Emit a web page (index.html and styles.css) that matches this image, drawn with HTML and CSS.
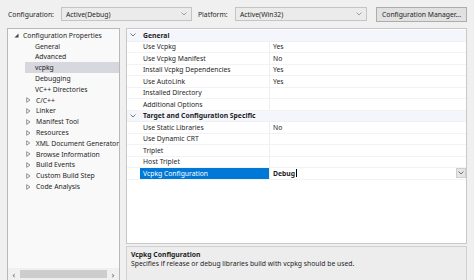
FILE: index.html
```html
<!DOCTYPE html>
<html lang="en">
<head>
  <meta charset="UTF-8" />
  <title>vcpkg Property Pages</title>
  <link rel="stylesheet" href="styles.css">
</head>
<body>

  <div class="toolbar">
    <span class="lbl lbl-config">Configuration:</span>
    <div class="combo combo-config">
      <span>Active(Debug)</span>
      <svg class="chev" width="6" height="4" viewBox="0 0 6 4"><path d="M0.5 0.5 L3 3 L5.5 0.5" fill="none" stroke="#8a8a8a" stroke-width="0.8"/></svg>
    </div>
    <span class="lbl lbl-platform">Platform:</span>
    <div class="combo combo-platform">
      <span>Active(Win32)</span>
      <svg class="chev" width="6" height="4" viewBox="0 0 6 4"><path d="M0.5 0.5 L3 3 L5.5 0.5" fill="none" stroke="#8a8a8a" stroke-width="0.8"/></svg>
    </div>
    <button class="btn">Configuration Manager...</button>
  </div>

  <div class="main">
    <div class="tree">
      <ul class="nodes">
        <li class="node root">
          <svg class="tri" width="5" height="5" viewBox="0 0 5 5"><path d="M4.5 0.5 L4.5 4.5 L0.5 4.5 Z" fill="#444"/></svg>
          Configuration Properties
        </li>
        <li class="node leaf">General</li>
        <li class="node leaf">Advanced</li>
        <li class="node leaf selected">vcpkg</li>
        <li class="node leaf">Debugging</li>
        <li class="node leaf">VC++ Directories</li>
        <li class="node closed"><svg class="tri" width="5" height="6" viewBox="0 0 5 6"><path d="M0.7 0.7 L4 3 L0.7 5.3 Z" fill="none" stroke="#777" stroke-width="0.8"/></svg>C/C++</li>
        <li class="node closed"><svg class="tri" width="5" height="6" viewBox="0 0 5 6"><path d="M0.7 0.7 L4 3 L0.7 5.3 Z" fill="none" stroke="#777" stroke-width="0.8"/></svg>Linker</li>
        <li class="node closed"><svg class="tri" width="5" height="6" viewBox="0 0 5 6"><path d="M0.7 0.7 L4 3 L0.7 5.3 Z" fill="none" stroke="#777" stroke-width="0.8"/></svg>Manifest Tool</li>
        <li class="node closed"><svg class="tri" width="5" height="6" viewBox="0 0 5 6"><path d="M0.7 0.7 L4 3 L0.7 5.3 Z" fill="none" stroke="#777" stroke-width="0.8"/></svg>Resources</li>
        <li class="node closed"><svg class="tri" width="5" height="6" viewBox="0 0 5 6"><path d="M0.7 0.7 L4 3 L0.7 5.3 Z" fill="none" stroke="#777" stroke-width="0.8"/></svg>XML Document Generator</li>
        <li class="node closed"><svg class="tri" width="5" height="6" viewBox="0 0 5 6"><path d="M0.7 0.7 L4 3 L0.7 5.3 Z" fill="none" stroke="#777" stroke-width="0.8"/></svg>Browse Information</li>
        <li class="node closed"><svg class="tri" width="5" height="6" viewBox="0 0 5 6"><path d="M0.7 0.7 L4 3 L0.7 5.3 Z" fill="none" stroke="#777" stroke-width="0.8"/></svg>Build Events</li>
        <li class="node closed"><svg class="tri" width="5" height="6" viewBox="0 0 5 6"><path d="M0.7 0.7 L4 3 L0.7 5.3 Z" fill="none" stroke="#777" stroke-width="0.8"/></svg>Custom Build Step</li>
        <li class="node closed"><svg class="tri" width="5" height="6" viewBox="0 0 5 6"><path d="M0.7 0.7 L4 3 L0.7 5.3 Z" fill="none" stroke="#777" stroke-width="0.8"/></svg>Code Analysis</li>
      </ul>
      <div class="hscroll">
        <span class="arrow">&lsaquo;</span>
        <div class="thumb"></div>
        <span class="arrow">&rsaquo;</span>
      </div>
    </div>

    <div class="right">
      <div class="grid">
        <div class="row header">
          <svg class="expand" width="6" height="4" viewBox="0 0 6 4"><path d="M0.5 0.5 L3 3 L5.5 0.5" fill="none" stroke="#555" stroke-width="0.8"/></svg>
          <span class="title">General</span>
        </div>
        <div class="row"><span></span><span class="name">Use Vcpkg</span><span class="value">Yes</span></div>
        <div class="row"><span></span><span class="name">Use Vcpkg Manifest</span><span class="value">No</span></div>
        <div class="row"><span></span><span class="name">Install Vcpkg Dependencies</span><span class="value">Yes</span></div>
        <div class="row"><span></span><span class="name">Use AutoLink</span><span class="value">Yes</span></div>
        <div class="row"><span></span><span class="name">Installed Directory</span><span class="value"></span></div>
        <div class="row"><span></span><span class="name">Additional Options</span><span class="value"></span></div>
        <div class="row header">
          <svg class="expand" width="6" height="4" viewBox="0 0 6 4"><path d="M0.5 0.5 L3 3 L5.5 0.5" fill="none" stroke="#555" stroke-width="0.8"/></svg>
          <span class="title">Target and Configuration Specific</span>
        </div>
        <div class="row"><span></span><span class="name">Use Static Libraries</span><span class="value">No</span></div>
        <div class="row"><span></span><span class="name">Use Dynamic CRT</span><span class="value"></span></div>
        <div class="row"><span></span><span class="name">Triplet</span><span class="value"></span></div>
        <div class="row"><span></span><span class="name">Host Triplet</span><span class="value"></span></div>
        <div class="row active">
          <span></span>
          <span class="name">Vcpkg Configuration</span>
          <span class="value editing">
            <b>Debug</b><i class="caret"></i>
            <span class="drop"><svg width="6" height="4" viewBox="0 0 6 4"><path d="M0.5 0.5 L3 3 L5.5 0.5" fill="none" stroke="#555" stroke-width="0.8"/></svg></span>
          </span>
        </div>
      </div>

      <div class="desc">
        <div class="desc-title">Vcpkg Configuration</div>
        <div class="desc-text">Specifies if release or debug libraries build with vcpkg should be used.</div>
      </div>
    </div>
  </div>

</body>
</html>
```

FILE: styles.css
```css
* { box-sizing: border-box; }
body {
  font-family: "Noto Sans", "Open Sans", sans-serif;
  font-size: 6.8px;
  color: #1e1e1e;
  background: #f0f0f0;
  margin: 0;
  overflow: hidden;
}

/* top bar */
.toolbar {
  display: flex;
  align-items: center;
  height: 28px;
  padding: 0 0 0 8px;
}

.lbl-config { width: 53px; }
.lbl-platform { width: 37px; margin-left: 6px; }

.combo {
  display: flex;
  align-items: center;
  justify-content: space-between;
  height: 14px;
  padding: 0 4px 0 4px;
  background: #ebebeb;
  border: 1px solid #c4c4c4;
}
.combo-config { width: 131px; }
.combo-platform { width: 132px; }

.btn {
  margin-left: 9px;
  width: 91px;
  height: 15px;
  padding: 0;
  font: inherit;
  color: #1e1e1e;
  background: #e1e1e1;
  border: 1px solid #adadad;
}

.main {
  display: flex;
  padding-left: 7px;
}

/* left tree */
.tree {
  width: 113px;
  height: 262px;
  background: #f9f9f9;
  border: 1px solid #b9b9b9;
  position: relative;
  overflow: hidden;
}

.nodes {
  list-style: none;
  margin: 0;
  padding: 1px 0 0;
}

.node {
  display: flex;
  align-items: center;
  height: 10.8px;
  white-space: nowrap;
}
.root { padding-left: 6px; }
.root .tri { margin-right: 4px; }
.leaf { padding-left: 27px; }
.closed { padding-left: 18px; }
.closed .tri { margin-right: 5px; }
.selected {
  background: #d6d7df;
  margin-left: 17px;
  padding-left: 10px;
}

.hscroll {
  position: absolute;
  left: 0;
  right: 0;
  top: 239px;
  height: 12px;
  display: flex;
  align-items: center;
  background: #f0f0f0;
}
.hscroll .arrow {
  width: 12px;
  text-align: center;
  font-size: 9px;
  color: #606060;
}
.hscroll .thumb {
  flex: 1;
  height: 8px;
  background: #cdcdcd;
}

/* right side */
.right {
  margin-left: 6px;
  width: 341px;
}

.grid {
  height: 216px;
  background: #fff;
  border: 1px solid #c8c8c8;
  padding-top: 1px;
}

.row {
  display: grid;
  grid-template-columns: 13px 129px 1fr;
  align-items: center;
  height: 11.5px;
  border-bottom: 1px solid #f3f3f3;
  white-space: nowrap;
}
.row .name { padding-left: 3px; }
.row .value {
  height: 100%;
  display: flex;
  align-items: center;
  padding-left: 3px;
  border-left: 1px solid #eeeeee;
}

.header {
  background: #f4f6fb;
  border-bottom: 1px solid #eef0f5;
}
.header .expand { margin-left: 3px; }
.header .title {
  grid-column: 2 / 4;
  padding-left: 3px;
  font-weight: bold;
}

.active .name {
  height: 100%;
  display: flex;
  align-items: center;
  background: #0078d7;
  color: #fff;
}
.editing b { font-weight: bold; }
.caret {
  width: 1px;
  height: 8px;
  background: #000;
  margin-left: 1px;
}
.drop {
  margin-left: auto;
  width: 10px;
  height: 10px;
  display: flex;
  align-items: center;
  justify-content: center;
  background: #e5e5e5;
  border: 1px solid #cfcfcf;
}

.desc {
  margin-top: 2px;
  height: 40px;
  padding: 2px 4px;
  background: #ededed;
  border: 1px solid #d0d0d0;
}
.desc-title {
  font-weight: bold;
  margin-top: 1px;
}
```
